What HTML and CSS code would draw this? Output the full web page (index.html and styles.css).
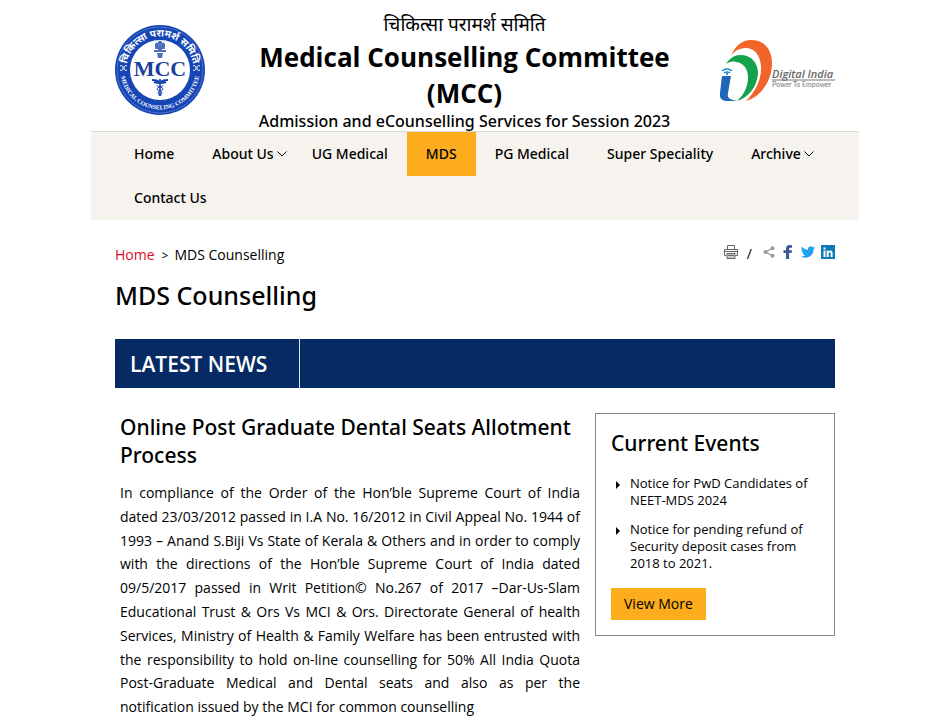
FILE: index.html
```html
<!DOCTYPE html>
<html lang="en">
<head>
    <meta charset="UTF-8">
    <meta name="viewport" content="width=device-width, initial-scale=1.0">
    <title>MDS Counselling | Medical Counselling Committee (MCC)</title>
    <link rel="stylesheet" href="styles.css">
</head>
<body>

<div class="wrapper">
    <header class="site-header">
        <a class="logo" href="#" aria-label="MCC home">
            <svg width="90" height="90" viewBox="0 0 90 90">
                <defs>
                    <path id="arc-top" d="M11.500 45a33.500 33.500 0 0 1 67 0"/>
                    <path id="arc-bottom" d="M5.500 45a39.500 39.500 0 0 0 79 0"/>
                </defs>
                <circle cx="45" cy="45" r="45" fill="#1645b5"/>
                <circle cx="45" cy="45" r="43" fill="none" stroke="#4a70c6" stroke-width="1"/>
                <circle cx="45" cy="45" r="30" fill="#fff"/>
                <text class="ring-hindi"><textPath href="#arc-top" startOffset="50%">चिकित्सा परामर्श समिति</textPath></text>
                <text class="ring-english"><textPath href="#arc-bottom" startOffset="50%">MEDICAL COUNSELING COMMITTEE</textPath></text>
                <g fill="none" stroke="#fff" stroke-width="1">
                    <path d="M5 41c2-1 3 0 3 2s-1 3-3 2M12 41c-2-1-3 0-3 2s1 3 3 2"/>
                    <path d="M78 41c2-1 3 0 3 2s-1 3-3 2M85 41c-2-1-3 0-3 2s1 3 3 2"/>
                </g>
                <g fill="#4d70ba">
                    <circle cx="45" cy="18" r="2.200"/>
                    <path d="M40 19c1-2 3-2 3 0v5h-3zM50 19c-1-2-3-2-3 0v5h3zM43 20h4v5h-4z"/>
                    <path d="M39 25h12v2H39zM42 28h6l-1 5h-4z"/>
                </g>
                <text class="logo-name" x="45" y="51">MCC</text>
                <g fill="none" stroke="#1645b5">
                    <path d="M45 54v17" stroke-width="1.600"/>
                    <path d="M37 55c3 0 5 0 8 2 3-2 5-2 8-2M39 57c2 1 4 1 6 1s4 0 6-1" stroke-width="2"/>
                    <path d="M42 60c0 2 6 2 6 4s-5 2-5 4 3 1 3 3M48 60c0 2-6 2-6 4s5 2 5 4-3 1-3 3"/>
                </g>
            </svg>
        </a>
        <div class="site-title">
            <p class="title-hindi" lang="hi">चिकित्सा परामर्श समिति</p>
            <h1>Medical Counselling Committee (MCC)</h1>
            <p class="tagline">Admission and eCounselling Services for Session 2023</p>
        </div>
        <a class="logo" href="#" aria-label="Digital India">
            <svg width="115" height="68" viewBox="0 -4 115 68">
                <path d="M11 16C15 6 22 0 31 0c13 0 21 9 21 23 0 17-10 33-26 38 10-10 16-23 15-35C40 12 31 5 20 9c-4 1-7 4-9 7z" fill="#f26529"/>
                <path d="M6 24C9 19 14 15 20 15c12 0 18 8 18 19-1 13-10 24-21 27 7-6 11-15 11-23 0-9-4-15-12-16-4-1-7 0-10 2z" fill="#13a24b"/>
                <path d="M2 36h9L8 53c-1 4 1 6 5 7l4 1H7c-5 0-8-3-7-8z" fill="#1e66b8"/>
                <path d="M2 31q5-4 10 0M4 33q3-2 6 0" fill="none" stroke="#1688c8" stroke-width="1.300"/>
                <circle cx="7" cy="34" r="1" fill="#1e66b8"/>
                <text class="di-name" x="52" y="38">Digital India</text>
                <path d="M52 40h63" stroke="#777" stroke-width="1"/>
                <text class="di-tag" x="52" y="47">Power To Empower</text>
            </svg>
        </a>
    </header>

    <nav class="main-nav">
        <a href="#">Home</a>
        <a href="#" class="has-sub">About Us<svg width="10" height="6" viewBox="0 0 10 6"><path d="M.5.5 5 5 9.500.5"/></svg></a>
        <a href="#">UG Medical</a>
        <a href="#" class="active">MDS</a>
        <a href="#">PG Medical</a>
        <a href="#">Super Speciality</a>
        <a href="#" class="has-sub">Archive<svg width="10" height="6" viewBox="0 0 10 6"><path d="M.5.5 5 5 9.500.5"/></svg></a>
        <a href="#">Contact Us</a>
    </nav>

    <main>
        <div class="top-bar">
            <div class="breadcrumb"><a href="#">Home</a><span class="sep">&gt;</span><span>MDS Counselling</span></div>
            <div class="share">
                <a href="#" aria-label="Print">
                    <svg width="14" height="14" viewBox="0 0 14 14" fill="none" stroke="#666">
                        <path d="M3.500 4.500v-4h7v4M2.500 10.500h-2v-6h13v6h-2M1 6.500h12"/>
                        <path d="M3 8.500h8v5H3z" fill="#ccc"/>
                        <path d="M4 10.500h6"/>
                    </svg>
                </a>
                <span class="slash">/</span>
                <a href="#" aria-label="Share">
                    <svg width="12" height="12" viewBox="0 0 12 12" fill="#999">
                        <path d="M10 2 2.500 6l7.500 4" fill="none" stroke="#999" stroke-width="1.300"/>
                        <circle cx="9.500" cy="2.200" r="2"/><circle cx="2.500" cy="6" r="2"/><circle cx="9.500" cy="9.800" r="2"/>
                    </svg>
                </a>
                <a href="#" aria-label="Facebook">
                    <svg width="14" height="14" viewBox="0 0 14 14"><path d="M5 14V8H2.500V5.200H5V3.600C5 1.200 6.500 0 8.700 0c1 0 2 .1 2.300.2v2.500H9.500c-1.100 0-1.400.6-1.400 1.400v1.100H11L10.600 8H8.100v6z" fill="#3b5998"/></svg>
                </a>
                <a href="#" aria-label="Twitter">
                    <svg width="14" height="14" viewBox="0 0 24 24"><path d="M24 4.600a10 10 0 0 1-2.800.8 5 5 0 0 0 2.100-2.700 10 10 0 0 1-3.100 1.200 4.900 4.900 0 0 0-8.400 4.500A14 14 0 0 1 1.700 3.100a4.900 4.900 0 0 0 1.500 6.600 5 5 0 0 1-2.200-.6 4.900 4.900 0 0 0 3.900 4.900 5 5 0 0 1-2.200.1 4.900 4.900 0 0 0 4.600 3.400A9.900 9.900 0 0 1 0 19.500 14 14 0 0 0 21.500 7a10 10 0 0 0 2.500-2.400z" fill="#1da1f2"/></svg>
                </a>
                <a href="#" aria-label="LinkedIn">
                    <svg width="14" height="14" viewBox="0 0 14 14"><path d="M0 0h14v14H0z" fill="#0a7ab8"/><path d="M2.500 5.500h2V12h-2zM2.500 2.500h2v2h-2zM5.700 5.500h1.900v.9c.9-1.500 4-1.400 4 1.400V12h-2V8.300c0-1.600-1.900-1.500-1.900 0V12h-2z" fill="#fff"/></svg>
                </a>
            </div>
        </div>

        <h2 class="page-title">MDS Counselling</h2>

        <div class="news-bar"><h2>LATEST NEWS</h2></div>

        <div class="content">
            <article>
                <h3>Online Post Graduate Dental Seats Allotment Process</h3>
                <p>In compliance of the Order of the Hon’ble Supreme Court of India dated 23/03/2012 passed in I.A No. 16/2012 in Civil Appeal No. 1944 of 1993 – Anand S.Biji Vs State of Kerala &amp; Others and in order to comply with the directions of the Hon’ble Supreme Court of India dated 09/5/2017 passed in Writ Petition© No.267 of 2017 –Dar-Us-Slam Educational Trust &amp; Ors Vs MCI &amp; Ors. Directorate General of health Services, Ministry of Health &amp; Family Welfare has been entrusted with the responsibility to hold on-line counselling for 50% All India Quota Post-Graduate Medical and Dental seats and also as per the notification issued by the MCI for common counselling</p>
            </article>
            <aside class="events">
                <h3>Current Events</h3>
                <ul>
                    <li><a href="#">Notice for PwD Candidates of NEET-MDS 2024</a></li>
                    <li><a href="#">Notice for pending refund of Security deposit cases from 2018 to 2021.</a></li>
                </ul>
                <a class="btn" href="#">View More</a>
            </aside>
        </div>
    </main>
</div>

</body>
</html>
```
FILE: styles.css
```css
* {
    box-sizing: border-box;
}

body {
    font-family: 'Open Sans', 'Noto Sans', sans-serif;
    font-size: 14px;
    color: #000;
    background-color: #fff;
    margin: 0;
}

a {
    color: inherit;
    text-decoration: none;
}

h1, h2, h3, p, ul {
    margin: 0;
    padding: 0;
}

svg {
    display: block;
}

.wrapper {
    max-width: 768px;
    margin: 0 auto;
}

/* header */
.site-header {
    display: flex;
    align-items: center;
    padding: 9px 24px 0;
}

.site-title {
    flex: 1;
    padding: 0 22px 0 26px;
    text-align: center;
}

.title-hindi {
    font-size: 19px;
    line-height: 30px;
}

.site-title h1 {
    font-size: 26px;
    font-weight: 700;
    line-height: 36px;
}

.tagline {
    font-family: 'Noto Sans', sans-serif;
    font-size: 16px;
    font-weight: 500;
    line-height: 20px;
}

.ring-hindi {
    fill: #fff;
    font-size: 10px;
    font-weight: 700;
    text-anchor: middle;
}

.ring-english {
    fill: #fff;
    font-family: 'Liberation Serif', serif;
    font-size: 6px;
    font-weight: 700;
    text-anchor: middle;
}

.logo-name {
    fill: #1b3f9c;
    font-family: 'Liberation Serif', serif;
    font-size: 22px;
    font-weight: 700;
    text-anchor: middle;
}

.di-name {
    fill: #666;
    font-size: 11px;
    font-style: italic;
    font-weight: 600;
}

.di-tag {
    fill: #777;
    font-family: Lato, sans-serif;
    font-size: 7px;
}

/* navigation */
.main-nav {
    display: flex;
    flex-wrap: wrap;
    padding: 0 24px;
    background-color: #f6f3ee;
    border-top: 1px solid #d5d9d2;
}

.main-nav a {
    padding: 0 19px;
    font-family: 'Noto Sans', sans-serif;
    font-weight: 500;
    line-height: 44px;
}

.main-nav .active {
    background-color: #fcac1c;
}

.main-nav .has-sub {
    display: flex;
    align-items: center;
    gap: 3px;
    padding-right: 6px;
}

.has-sub svg {
    fill: none;
    stroke: #000;
}

/* page */
main {
    padding: 24px 24px 0;
}

.top-bar {
    display: flex;
    justify-content: space-between;
}

.breadcrumb {
    line-height: 22px;
}

.breadcrumb a {
    color: #dc0b1e;
}

.sep {
    margin: 0 6px 0 7px;
    font-size: 12px;
}

.share {
    display: flex;
    align-items: center;
    gap: 6px;
    height: 16px;
}

.slash {
    margin: 0 5px 0 3px;
    padding-top: 3px;
}

.page-title {
    margin: 12px 0 28px;
    font-family: 'Noto Sans', sans-serif;
    font-size: 25px;
    font-weight: 500;
    line-height: 32px;
}

.news-bar {
    display: flex;
    background-color: #062a64;
}

.news-bar h2 {
    width: 185px;
    padding: 1px 0 0 15px;
    border-right: 1px solid #dde2ea;
    color: #fff;
    font-size: 21px;
    font-weight: 600;
    line-height: 48px;
}

.content {
    display: flex;
    align-items: flex-start;
    gap: 15px;
    padding: 25px 0 0 5px;
}

article {
    flex: 1;
}

article h3,
.events h3 {
    font-family: 'Noto Sans', sans-serif;
    font-size: 21px;
    font-weight: 500;
    line-height: 28px;
}

article p {
    margin-top: 12px;
    line-height: 1.7;
    text-align: justify;
}

.events {
    width: 240px;
    padding: 15px;
    border: 1px solid #888;
}

.events ul {
    margin: 18px 0 16px;
    list-style: none;
}

.events li {
    display: flex;
    gap: 10px;
    padding-left: 5px;
    font-size: 13px;
    line-height: 17px;
}

.events li + li {
    margin-top: 12px;
}

.events li::before {
    content: "";
    flex: none;
    align-self: flex-start;
    margin-top: 6px;
    border: 4px solid transparent;
    border-left-color: #000;
    border-right-width: 0;
}

.events .btn {
    display: inline-block;
    padding: 0 13px;
    background-color: #fcac1c;
    line-height: 32px;
}
```
